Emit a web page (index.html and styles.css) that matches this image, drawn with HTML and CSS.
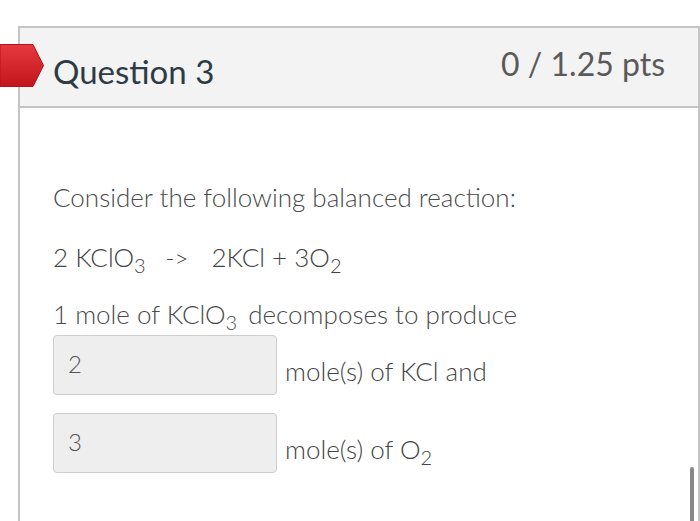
FILE: index.html
```html
<!DOCTYPE html>
<html>
<head>
<meta charset="utf-8">
<link rel="stylesheet" href="styles.css">
</head>
<body>
<div class="flag"><svg width="44" height="43" viewBox="0 0 44 43"><defs><linearGradient id="g" x1="0" y1="0" x2="0" y2="1"><stop offset="0" stop-color="#e5393f"/><stop offset="1" stop-color="#c3141c"/></linearGradient></defs><polygon points="0,0.5 33,0.5 43.5,21.5 33,42.5 0,42.5" fill="url(#g)" stroke="#b3131a" stroke-width="1"/></svg></div>
<div class="card">
  <div class="header">
    <div class="title">Question 3</div>
    <div class="pts">0 / 1.25 pts</div>
  </div>
  <div class="content">
    <p class="line first">Consider the following balanced reaction:</p>
    <p class="line eq"><span>2 KClO<sub>3</sub></span><span class="arrow">-&gt;</span><span>2KCl + 3O<sub>2</sub></span></p>
    <p class="line third">1 mole of KClO<sub class="gap">3</sub> decomposes to produce</p>
    <div class="row">
      <div class="input">2</div>
      <div class="label">mole(s) of KCl and</div>
    </div>
    <div class="row second">
      <div class="input">3</div>
      <div class="label">mole(s) of O<sub>2</sub></div>
    </div>
  </div>
</div>
<div class="scroll"></div>
</body>
</html>
```
FILE: styles.css
```css
html, body {
  margin: 0;
  padding: 0;
  background: #ffffff;
  overflow: hidden;
  height: 521px;
}
body {
  font-family: Lato, "Liberation Sans", sans-serif;
  position: relative;
}
.flag {
  position: absolute;
  left: 0;
  top: 44px;
  width: 44px;
  height: 43px;
  z-index: 2;
}
.flag svg { display: block; }
.card {
  margin: 26px 0 0 18px;
  width: 678px;
  border: 2px solid #c4c4c4;
  border-bottom: none;
  height: 600px;
}
.header {
  height: 78px;
  background: #f3f3f3;
  border-bottom: 2px solid #c4c4c4;
  display: flex;
  justify-content: space-between;
  align-items: flex-start;
  padding: 0 33px;
}
.title {
  font-size: 33px;
  line-height: 40px;
  color: #2d3b45;
  margin-top: 23px;
}
.pts {
  font-size: 32px;
  line-height: 37px;
  color: #5a5a5a;
  margin-top: 17px;
}
.content {
  padding: 74px 0 0 33px;
  color: #4a4a4a;
}
.line {
  margin: 0;
  font-size: 26px;
  line-height: 30px;
  font-weight: 300;
}
.eq { margin-top: 30px; color: #444; }
.eq .arrow { margin: 0 23px 0 20px; font-size: 24px; }
.third { margin-top: 26px; }
sub {
  font-size: 20px;
  line-height: 0;
  vertical-align: -6px;
}
sub.gap { margin-right: 4px; }
.row {
  display: flex;
  align-items: flex-end;
  margin-top: 6px;
}
.row.second { margin-top: 18px; }
.input {
  box-sizing: border-box;
  width: 224px;
  height: 60px;
  background: #eeeeee;
  border: 1px solid #cdcdcd;
  border-radius: 4px;
  padding-left: 14px;
  font-size: 24px;
  font-weight: 300;
  line-height: 56px;
  color: #555;
}
.label {
  margin-left: 8px;
  margin-bottom: 9px;
  font-size: 26px;
  line-height: 30px;
  font-weight: 300;
  color: #444;
}
.scroll {
  position: absolute;
  left: 690px;
  top: 467px;
  width: 4px;
  height: 60px;
  background: #888;
  border-radius: 2px 2px 0 0;
}
```
